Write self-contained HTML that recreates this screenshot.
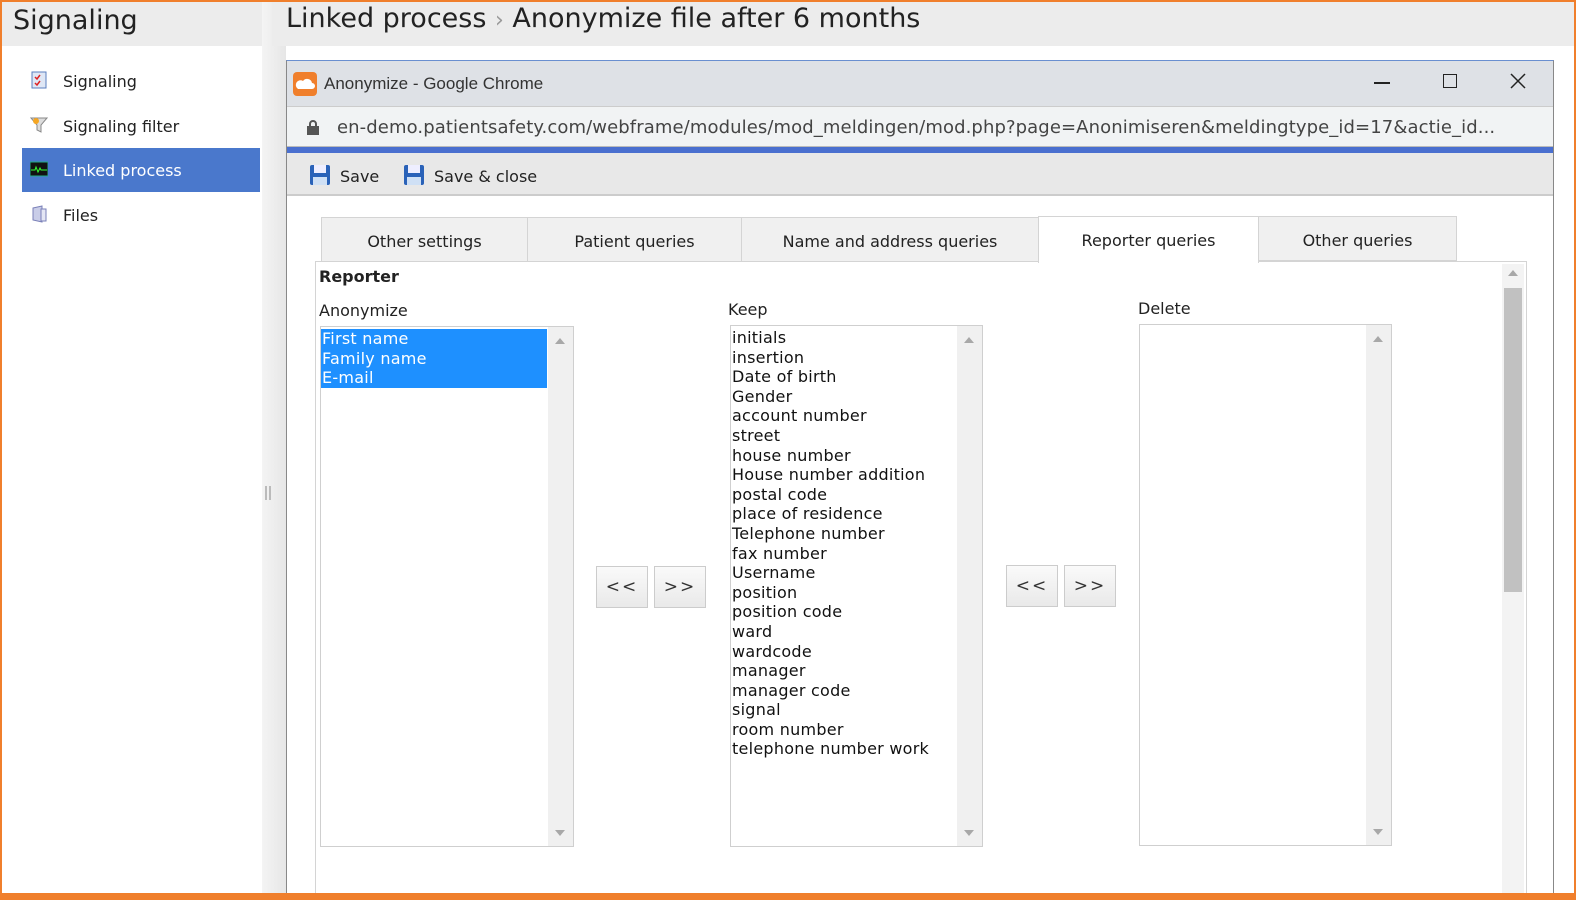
<!DOCTYPE html>
<html style="width:1576px;height:900px;overflow:hidden"><head><style>
*{margin:0;padding:0;box-sizing:border-box}
body{width:1576px;height:900px;overflow:hidden;background:#fff;font-family:"DejaVu Sans","Liberation Sans",sans-serif;position:relative}
.a{position:absolute}
.frame{position:absolute;left:0;top:0;width:1576px;height:900px;border:2px solid #f07f2c;border-bottom-width:7px;pointer-events:none;z-index:10}
.side{left:0;top:0;width:262px;height:900px;background:#fff}
.sh{left:0;top:0;width:262px;height:46px;background:#ececec;font-size:27px;color:#222;padding:5px 0 0 13px}
.nav{left:22px;width:238px;height:44px;font-size:16px;color:#222;padding:13px 0 0 41px}
.nav.sel{background:#4a78cc;color:#fff}
.ic{position:absolute;left:8px;top:12px;width:18px;height:18px}
.split{left:262px;top:0;width:24px;height:900px;background:linear-gradient(90deg,#f4f4f4,#e6e6e6)}
.mh{left:272px;top:0;width:1304px;height:46px;background:#ececec;font-size:27px;color:#222;padding:3px 0 0 14px}
.win{left:286px;top:60px;width:1268px;height:840px;border:1px solid #888;border-top-color:#6a8fd0;background:#fff}
.tb{left:0;top:0;width:1266px;height:45px;background:#dee1e6;font-family:"Liberation Sans",sans-serif;font-size:17px;color:#333}
.url{left:0;top:45px;width:1266px;height:41px;background:#f1f3f4;border-top:1px solid #ccc;border-bottom:1px solid #bbb;font-size:18px;color:#444;padding:10px 0 0 50px;white-space:nowrap;letter-spacing:0.1px}
.blue{left:0;top:86px;width:1266px;height:6px;background:#4a6fcf}
.tool{left:0;top:92px;width:1266px;height:43px;background:#e8e8e8;border-bottom:2px solid #ccc;font-size:16px;color:#222}
.tab{top:156px;height:45px;background:#f0f0f0;border:1px solid #d4d4d4;font-size:16px;color:#222;text-align:center;padding-top:14px}
.panel{left:28px;top:200px;width:1212px;height:650px;border:1px solid #d4d4d4;background:#fff}
.lbl{font-size:16px;color:#222}
.lb{border:1px solid #cfcfcf;background:#fff;font-size:16px;line-height:19.6px;color:#111;overflow:hidden;letter-spacing:0.25px}
.lb .sb{position:absolute;right:0;top:0;width:25px;height:100%;background:#f0f0f0}
.up,.dn{position:absolute;left:7px;width:0;height:0;border-left:5px solid transparent;border-right:5px solid transparent}
.up{top:11px;border-bottom:6px solid #a8a8a8}
.dn{bottom:10px;border-top:6px solid #a8a8a8}
.btn{width:52px;height:42px;border:1px solid #ccc;background:linear-gradient(#fafafa,#e9e9e9);font-size:17px;color:#333;text-align:center;line-height:40px;letter-spacing:2px}
</style></head><body>
<div class="a side"></div>
<div class="a sh">Signaling</div>
<div class="a nav" style="top:59px"><svg class="ic" viewBox="0 0 18 18"><rect x="2" y="1" width="14" height="16" fill="#dfe7f5" stroke="#5b7fbf"/><path d="M5 6l2 2 3-4M5 12l2 2 3-4" stroke="#d22" fill="none" stroke-width="1.5"/></svg>Signaling</div>
<div class="a nav" style="top:104px"><svg class="ic" viewBox="0 0 18 18"><path d="M1 2h16l-6 7v7l-4-2V9z" fill="#ddd" stroke="#888"/><circle cx="6" cy="5" r="3" fill="#f5a623"/></svg>Signaling filter</div>
<div class="a nav sel" style="top:148px"><svg class="ic" viewBox="0 0 18 18"><rect x="0" y="2" width="18" height="14" fill="#111" stroke="#2a8"/><path d="M1 10h4l1-3 2 5 2-4 1 2h6" stroke="#3f3" fill="none"/></svg>Linked process</div>
<div class="a nav" style="top:193px"><svg class="ic" viewBox="0 0 18 18"><path d="M3 3l9-2v16l-9-2z" fill="#c9cde8" stroke="#7a80b8"/><rect x="11" y="4" width="5" height="12" fill="#e4e6f4" stroke="#7a80b8"/></svg>Files</div>
<div class="a split"><div class="a" style="left:3px;top:486px;width:2px;height:14px;background:#bbb"></div><div class="a" style="left:7px;top:486px;width:2px;height:14px;background:#bbb"></div></div>
<div class="a mh">Linked process <span style="color:#999;font-size:22px">›</span> Anonymize file after 6 months</div>
<div class="a win">
 <div class="a tb">
  <div class="a" style="left:6px;top:11px;width:24px;height:24px;background:#f07f2c;border-radius:4px"><svg viewBox="0 0 24 24" width="24" height="24"><path d="M5 17h14a3 3 0 0 0 0-6 5 5 0 0 0-9-2 4 4 0 0 0-5 8z" fill="#fff"/></svg></div>
  <div class="a" style="left:37px;top:13px">Anonymize - Google Chrome</div>
  <div class="a" style="left:1087px;top:21px;width:16px;height:1.5px;background:#222"></div>
  <div class="a" style="left:1156px;top:13px;width:14px;height:14px;border:1.5px solid #222"></div>
  <svg class="a" style="left:1223px;top:12px" width="16" height="16"><path d="M1 1L15 15M15 1L1 15" stroke="#222" stroke-width="1.5"/></svg>
 </div>
 <div class="a url"><svg class="a" style="left:20px;top:13px" width="12" height="15"><rect x="0" y="6" width="12" height="9" fill="#555"/><path d="M3 7V4a3 3 0 0 1 6 0v3" stroke="#555" stroke-width="2" fill="none"/></svg>en-demo.patientsafety.com/webframe/modules/mod_meldingen/mod.php?page=Anonimiseren&amp;meldingtype_id=17&amp;actie_id...</div>
 <div class="a blue"></div>
 <div class="a tool">
  <svg class="a" style="left:22px;top:11px" width="22" height="22" viewBox="0 0 22 22"><rect x="1" y="1" width="20" height="20" rx="2" fill="#2a62b8"/><rect x="5" y="1" width="12" height="8" fill="#eef"/><rect x="4" y="13" width="14" height="8" fill="#cfe0f5"/></svg>
  <div class="a" style="left:53px;top:14px">Save</div>
  <svg class="a" style="left:116px;top:11px" width="22" height="22" viewBox="0 0 22 22"><rect x="1" y="1" width="20" height="20" rx="2" fill="#2a62b8"/><rect x="5" y="1" width="12" height="8" fill="#eef"/><rect x="4" y="13" width="14" height="8" fill="#cfe0f5"/></svg>
  <div class="a" style="left:147px;top:14px">Save &amp; close</div>
 </div>
 <div class="a tab" style="left:34px;width:207px">Other settings</div>
 <div class="a tab" style="left:240px;width:215px">Patient queries</div>
 <div class="a tab" style="left:454px;width:298px">Name and address queries</div>
 <div class="a tab" style="left:971px;width:199px;top:155px">Other queries</div>
 <div class="a panel">
  <div class="a" style="right:2px;top:2px;width:22px;height:646px;background:#f3f3f3"><div class="up" style="left:6px;top:6px"></div><div class="a" style="left:2px;top:24px;width:18px;height:304px;background:#c1c1c1"></div></div>
  <div class="a lbl" style="left:3px;top:5px;font-weight:bold">Reporter</div>
  <div class="a lbl" style="left:3px;top:39px">Anonymize</div>
  <div class="a lbl" style="left:412px;top:38px">Keep</div>
  <div class="a lbl" style="left:822px;top:37px">Delete</div>
  <div class="a lb" style="left:4px;top:64px;width:254px;height:521px;padding-top:2px"><div style="background:#1e90ff;color:#fff;width:226px;padding-left:1px">First name<br>Family name<br>E-mail</div><div class="sb"><div class="up"></div><div class="dn"></div></div></div>
  <div class="a lb" style="left:414px;top:63px;width:253px;height:522px;padding-left:1px;padding-top:2px">initials<br>insertion<br>Date of birth<br>Gender<br>account number<br>street<br>house number<br>House number addition<br>postal code<br>place of residence<br>Telephone number<br>fax number<br>Username<br>position<br>position code<br>ward<br>wardcode<br>manager<br>manager code<br>signal<br>room number<br>telephone number work<div class="sb"><div class="up"></div><div class="dn"></div></div></div>
  <div class="a lb" style="left:823px;top:62px;width:253px;height:522px"><div class="sb"><div class="up"></div><div class="dn"></div></div></div>
  <div class="a btn" style="left:280px;top:304px">&lt;&lt;</div>
  <div class="a btn" style="left:338px;top:304px">&gt;&gt;</div>
  <div class="a btn" style="left:690px;top:303px">&lt;&lt;</div>
  <div class="a btn" style="left:748px;top:303px">&gt;&gt;</div>
 </div>
 <div class="a tab" style="left:751px;width:221px;top:155px;height:47px;background:#fff;border-bottom:none">Reporter queries</div>
</div>
<div class="frame"></div>
</body></html>
